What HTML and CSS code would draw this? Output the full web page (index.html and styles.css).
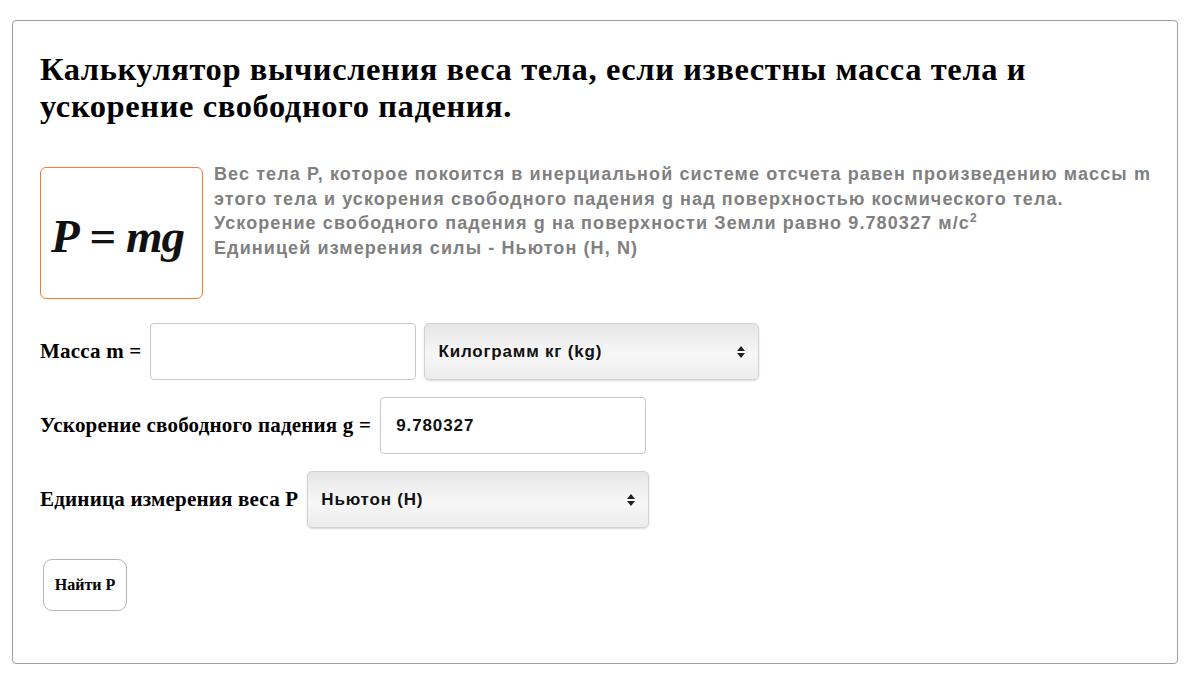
FILE: index.html
```html
<!DOCTYPE html>
<html lang="ru">
<head>
    <meta charset="UTF-8">
    <meta name="viewport" content="width=device-width, initial-scale=1.0">
    <title>Калькулятор веса тела</title>
    <link rel="stylesheet" href="styles.css">
</head>
<body>
    <div class="calc">
        <h1>Калькулятор вычисления веса тела, если известны масса тела и ускорение свободного падения.</h1>

        <div class="intro">
            <div class="formula"><i>P</i>&nbsp;=&nbsp;<i>mg</i></div>
            <p class="desc">
                Вес тела P, которое покоится в инерциальной системе отсчета равен произведению массы m<br>
                этого тела и ускорения свободного падения g над поверхностью космического тела.<br>
                Ускорение свободного падения g на поверхности Земли равно 9.780327 м/с<sup>2</sup><br>
                Единицей измерения силы - Ньютон (Н, N)
            </p>
        </div>

        <div class="row">
            <label class="lbl" for="mass">Масса m =</label>
            <input class="field" id="mass" type="text">
            <div class="pick wide">
                <select>
                    <option>Килограмм кг (kg)</option>
                    <option>Грамм г (g)</option>
                    <option>Тонна т (t)</option>
                </select>
                <svg class="arrows" width="8" height="12" viewBox="0 0 8 12"><path d="M4 0L8 5H0Z M4 12L0 7H8Z" fill="#222"/></svg>
            </div>
        </div>

        <div class="row">
            <label class="lbl" for="grav">Ускорение свободного падения g =</label>
            <input class="field" id="grav" type="text" value="9.780327">
        </div>

        <div class="row">
            <label class="lbl">Единица измерения веса P</label>
            <div class="pick">
                <select>
                    <option>Ньютон (Н)</option>
                    <option>Килоньютон (кН)</option>
                </select>
                <svg class="arrows" width="8" height="12" viewBox="0 0 8 12"><path d="M4 0L8 5H0Z M4 12L0 7H8Z" fill="#222"/></svg>
            </div>
        </div>

        <button class="go" type="button">Найти P</button>
    </div>
</body>
</html>
```

FILE: styles.css
```css
/* Page */
body {
    margin: 0;
    padding: 20px 22px 16px 12px;
    background: #fff;
    font-family: 'Liberation Serif', serif;
    color: #000;
}

/* Calculator frame */
.calc {
    border: 1px solid #a69c94;
    border-radius: 4px;
    padding: 30px 27px 52px 27px;
}
.calc h1 {
    margin: 0 0 37px 0;
    font-size: 32.5px;
    line-height: 37px;
    letter-spacing: 0.6px;
    font-weight: bold;
    max-width: 1040px;
}

/* Formula + description */
.intro {
    display: flex;
    align-items: flex-start;
    gap: 11px;
    margin-bottom: 24px;
}
.formula {
    flex: none;
    box-sizing: border-box;
    width: 163px;
    height: 132px;
    border: 1px solid #f47b38;
    border-radius: 6px;
    margin-top: 5px;
    padding: 6px 8px 0 0;
    display: flex;
    align-items: center;
    justify-content: center;
    font-size: 47px;
    font-weight: bold;
    color: #111;
    letter-spacing: -1px;
}
.desc {
    margin: 0;
    font-family: 'Liberation Sans', Arial, sans-serif;
    font-weight: bold;
    font-size: 18px;
    line-height: 24.5px;
    letter-spacing: 1.1px;
    color: #808080;
    white-space: nowrap;
}
.desc sup {
    font-size: 12px;
    line-height: 0;
    letter-spacing: 0;
}

/* Form rows */
.row {
    display: flex;
    align-items: center;
    gap: 8px;
    margin-bottom: 17px;
}
.lbl {
    font-size: 21px;
    letter-spacing: 0.2px;
    font-weight: bold;
    white-space: nowrap;
    margin-right: 1px;
}
.field {
    width: 266px;
    height: 57px;
    box-sizing: border-box;
    border: 1px solid #c8c8c8;
    border-radius: 4px;
    padding: 0 15px;
    font-family: 'Liberation Sans', Arial, sans-serif;
    font-weight: bold;
    font-size: 17px;
    letter-spacing: 0.9px;
    color: #111;
    outline: none;
}

/* Selects */
.pick {
    position: relative;
    width: 342px;
}
.pick.wide {
    width: 335px;
}
.pick select {
    appearance: none;
    -webkit-appearance: none;
    width: 100%;
    height: 57px;
    border: 1px solid #d2d2d2;
    border-radius: 5px;
    padding: 0 30px 0 13px;
    background: linear-gradient(#e6e6e6, #f7f7f7 55%, #ececec);
    box-shadow: 0 1px 2px rgba(0, 0, 0, 0.15);
    font-family: 'Liberation Sans', Arial, sans-serif;
    font-weight: bold;
    font-size: 17px;
    letter-spacing: 0.8px;
    color: #111;
}
.arrows {
    position: absolute;
    right: 14px;
    top: 23px;
    pointer-events: none;
}

/* Submit */
.go {
    display: block;
    margin: 31px 0 0 3px;
    width: 84px;
    height: 52px;
    background: #fff;
    border: 1px solid #b4b4b4;
    border-radius: 9px;
    font-family: 'Liberation Serif', serif;
    font-weight: bold;
    font-size: 16px;
    color: #000;
}
```
